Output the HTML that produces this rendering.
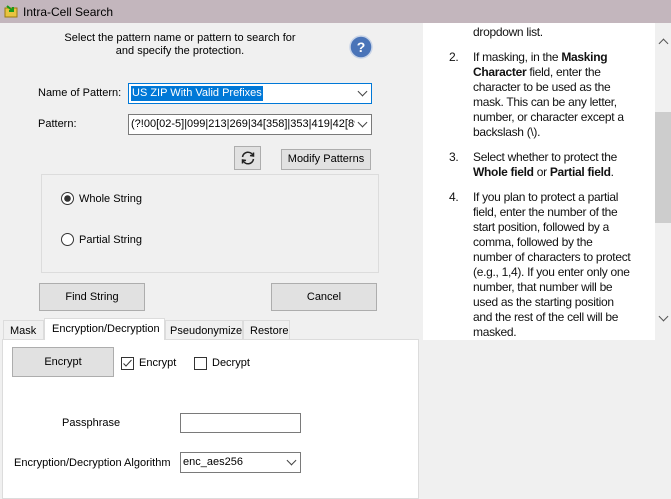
<!DOCTYPE html>
<html><head><style>
*{margin:0;padding:0;box-sizing:border-box}
body{width:671px;height:495px;background:#f0f0f0;font-family:"Liberation Sans",Arial,sans-serif;font-size:11px;color:#000;position:relative;overflow:hidden}
.a{position:absolute;white-space:nowrap}
.btn{position:absolute;background:#e1e1e1;border:1px solid #adadad;text-align:center}
.combo{position:absolute;background:#fff;border:1px solid #7a7a7a;white-space:nowrap;overflow:hidden}
.chev{position:absolute;right:5px;top:4px;width:7px;height:7px;border-right:1px solid #444;border-bottom:1px solid #444;transform:rotate(45deg)}
.help{position:absolute;left:423px;top:23px;width:232px;height:317px;background:#fff;font-size:12px;line-height:15px;color:#111;letter-spacing:-0.3px}
.help p{position:absolute;left:50px;white-space:nowrap}
.help span.n{position:absolute;left:-24px}
</style></head><body>
<div class="a" style="left:0;top:0;width:671px;height:23px;background:#c3b6bd"></div>
<svg class="a" style="left:4px;top:4px" width="14" height="14"><rect x="1" y="4" width="12" height="9" fill="#e8c440" stroke="#9a7a10"/><path d="M3 2 L9 7 M9 3 L9 7 L5 7" stroke="#1a9a1a" stroke-width="2" fill="none"/></svg>
<div class="a" style="left:23px;top:5px;font-size:12px">Intra-Cell Search</div>
<div class="a" style="left:0;top:32px;width:360px;text-align:center;line-height:13px">Select the pattern name or pattern to search for<br>and specify the protection.</div>
<svg class="a" style="left:349px;top:35px" width="24" height="24"><circle cx="12" cy="12" r="11" fill="#4a74b8" stroke="#c8d4e8" stroke-width="1.5"/><text x="12" y="17" text-anchor="middle" fill="#fff" font-weight="bold" font-size="14" font-family="Liberation Sans">?</text></svg>
<div class="a" style="left:38px;top:87px">Name of Pattern:</div>
<div class="combo" style="left:128px;top:83px;width:244px;height:21px;border-color:#0078d7"><span style="position:absolute;left:2px;top:2px;background:#0078d7;color:#fff;padding:0 1px;line-height:15px">US ZIP With Valid Prefixes</span><div class="chev"></div></div>
<div class="a" style="left:38px;top:118px">Pattern:</div>
<div class="combo" style="left:128px;top:114px;width:244px;height:21px"><span style="position:absolute;left:2px;top:3px;width:224px;overflow:hidden">(?!00[02-5]|099|213|269|34[358]|353|419|42[89]</span><div class="chev"></div></div>
<div class="btn" style="left:234px;top:146px;width:27px;height:24px"><svg width="18" height="18" style="margin-top:2px"><path d="M3.5 8 A5.5 5.5 0 0 1 14 6.5 M14.5 10 A5.5 5.5 0 0 1 4 11.5" stroke="#222" stroke-width="1.5" fill="none"/><path d="M11 6.5 L14.5 7 L14.5 3.5 M7 11.5 L3.5 11 L3.5 14.5" stroke="#222" stroke-width="1.5" fill="none"/></svg></div>
<div class="btn" style="left:281px;top:149px;width:90px;height:21px;line-height:19px">Modify Patterns</div>
<div class="a" style="left:41px;top:174px;width:338px;height:99px;border:1px solid #dcdcdc"></div>
<svg class="a" style="left:61px;top:192px" width="13" height="13"><circle cx="6.5" cy="6.5" r="6" fill="#fff" stroke="#333"/><circle cx="6.5" cy="6.5" r="3.3" fill="#333"/></svg>
<div class="a" style="left:79px;top:193px">Whole String</div>
<svg class="a" style="left:61px;top:233px" width="13" height="13"><circle cx="6.5" cy="6.5" r="6" fill="#fff" stroke="#333"/></svg>
<div class="a" style="left:79px;top:234px">Partial String</div>
<div class="btn" style="left:39px;top:283px;width:106px;height:28px;line-height:26px">Find String</div>
<div class="btn" style="left:271px;top:283px;width:106px;height:28px;line-height:26px">Cancel</div>
<div class="a" style="left:2px;top:339px;width:417px;height:160px;background:#fff;border:1px solid #dcdcdc"></div>
<div class="a" style="left:3px;top:320px;width:41px;height:19px;border:1px solid #dcdcdc;border-bottom:none;padding:4px 0 0 6px">Mask</div>
<div class="a" style="left:44px;top:318px;width:121px;height:22px;background:#fff;border:1px solid #dcdcdc;border-bottom:none;padding:4px 0 0 7px">Encryption/Decryption</div>
<div class="a" style="left:165px;top:320px;width:78px;height:19px;border:1px solid #dcdcdc;border-bottom:none;padding:4px 0 0 4px">Pseudonymize</div>
<div class="a" style="left:243px;top:320px;width:47px;height:19px;border:1px solid #dcdcdc;border-bottom:none;padding:4px 0 0 6px">Restore</div>
<div class="btn" style="left:12px;top:347px;width:102px;height:30px;line-height:28px">Encrypt</div>
<svg class="a" style="left:121px;top:357px" width="13" height="13"><rect x=".5" y=".5" width="12" height="12" fill="#fff" stroke="#333"/><path d="M2.5 6.5 L5 9 L10.5 3" stroke="#333" fill="none"/></svg>
<div class="a" style="left:139px;top:357px">Encrypt</div>
<svg class="a" style="left:194px;top:357px" width="13" height="13"><rect x=".5" y=".5" width="12" height="12" fill="#fff" stroke="#333"/></svg>
<div class="a" style="left:212px;top:357px">Decrypt</div>
<div class="a" style="left:62px;top:417px">Passphrase</div>
<div class="a" style="left:180px;top:413px;width:121px;height:20px;background:#fff;border:1px solid #7a7a7a"></div>
<div class="a" style="left:14px;top:457px">Encryption/Decryption Algorithm</div>
<div class="combo" style="left:180px;top:452px;width:121px;height:21px"><span style="position:absolute;left:2px;top:3px">enc_aes256</span><div class="chev"></div></div>
<div class="help">
<p style="top:2px">dropdown list.</p>
<p style="top:27px"><span class="n">2.</span>If masking, in the <b>Masking</b><br><b>Character</b> field, enter the<br>character to be used as the<br>mask. This can be any letter,<br>number, or character except a<br>backslash (\).</p>
<p style="top:127px"><span class="n">3.</span>Select whether to protect the<br><b>Whole field</b> or <b>Partial field</b>.</p>
<p style="top:167px"><span class="n">4.</span>If you plan to protect a partial<br>field, enter the number of the<br>start position, followed by a<br>comma, followed by the<br>number of characters to protect<br>(e.g., 1,4). If you enter only one<br>number, that number will be<br>used as the starting position<br>and the rest of the cell will be<br>masked.</p>
</div>
<div class="a" style="left:655px;top:23px;width:16px;height:317px;background:#f0f0f0"></div>
<div class="a" style="left:655px;top:112px;width:16px;height:111px;background:#cdcdcd"></div>
<div class="a" style="left:660px;top:40px;width:7px;height:7px;border-left:1.5px solid #555;border-top:1.5px solid #555;transform:rotate(45deg)"></div>
<div class="a" style="left:660px;top:313px;width:7px;height:7px;border-right:1.5px solid #555;border-bottom:1.5px solid #555;transform:rotate(45deg)"></div>
</body></html>
